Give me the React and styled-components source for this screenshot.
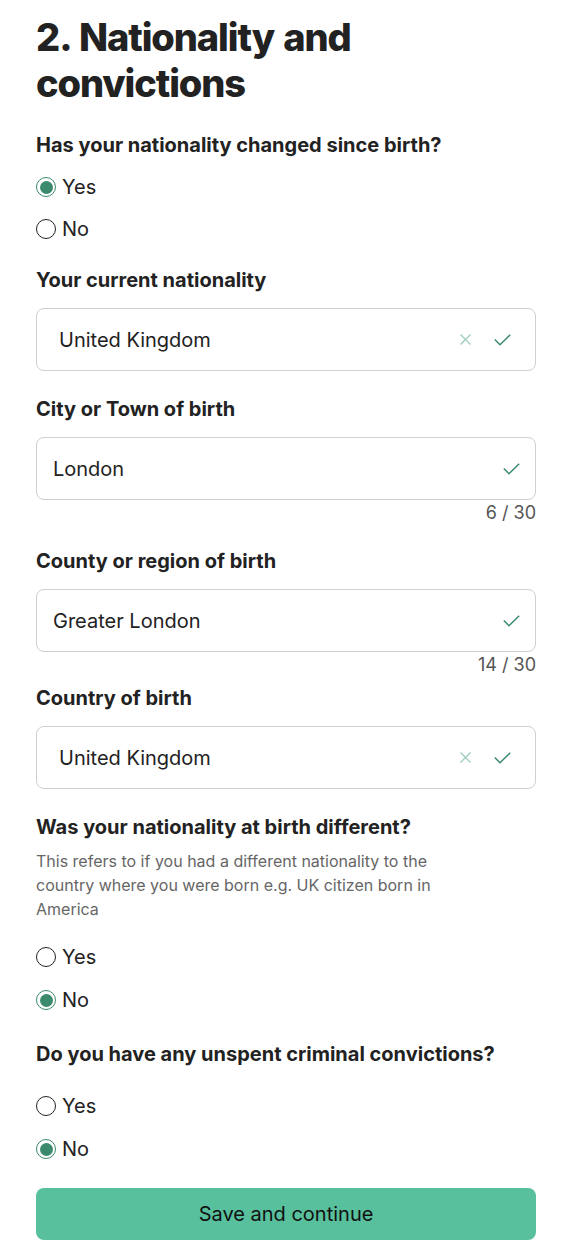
import React from 'react';
import styled, { createGlobalStyle } from 'styled-components';

const GlobalStyle = createGlobalStyle`
  body {
    margin: 0;
    background: #fff;
    font-family: Inter, "Noto Sans", sans-serif;
    color: #222;
  }
`;

const Page = styled.div`
  width: 500px;
  padding: 14px 36px 12px;
`;

const Title = styled.h1`
  margin: 0 0 26px;
  font-size: 38px;
  line-height: 46px;
  font-weight: 800;
  letter-spacing: -1.1px;
  word-spacing: 2px;
  color: #222;
`;

const Field = styled.div`
  display: flex;
  flex-direction: column;
  margin-bottom: ${(p) => p.gap ?? 25}px;
`;

const Label = styled.div`
  font-size: 20px;
  font-weight: 700;
  line-height: 26px;
  color: #222;
  margin-bottom: ${(p) => p.mb ?? 15}px;
`;

const Help = styled.div`
  max-width: 430px;
  font-size: 16px;
  line-height: 24px;
  color: #666;
  margin-bottom: 24px;
`;

const RadioList = styled.div`
  display: flex;
  flex-direction: column;
  gap: ${(p) => p.gap ?? 18}px;
`;

const RadioRow = styled.label`
  display: flex;
  align-items: center;
  gap: 6px;
  font-size: 20px;
  line-height: 24px;
  color: #222;
`;

const Dot = styled.span`
  width: 20px;
  height: 20px;
  box-sizing: border-box;
  border-radius: 50%;
  border: 1px solid ${(p) => (p.$on ? '#3b8a6c' : '#222')};
  display: flex;
  align-items: center;
  justify-content: center;
  &::after {
    content: '';
    display: ${(p) => (p.$on ? 'block' : 'none')};
    width: 13px;
    height: 13px;
    border-radius: 50%;
    background: #3b8a6c;
  }
`;

const Box = styled.div`
  height: 63px;
  box-sizing: border-box;
  border: 1px solid #cfcfcf;
  border-radius: 8px;
  display: flex;
  align-items: center;
  padding: 0 ${(p) => (p.$select ? 24 : 15)}px 0 ${(p) => (p.$select ? 22 : 16)}px;
  font-size: 20px;
  color: #222;
`;

const Value = styled.span`
  flex: 1;
`;

const Icons = styled.span`
  display: flex;
  align-items: center;
  gap: 23px;
`;

const Counter = styled.div`
  text-align: right;
  font-size: 18px;
  line-height: 20px;
  color: #555;
  margin-top: 3px;
`;

const Button = styled.button`
  display: block;
  width: 100%;
  height: 52px;
  border: none;
  border-radius: 8px;
  background: #58c09d;
  color: #111;
  font-family: inherit;
  font-size: 20px;
`;

const Cross = () => (
  <svg width="11" height="11" viewBox="0 0 11 11">
    <path d="M0.5 0.5 L10.5 10.5 M10.5 0.5 L0.5 10.5" stroke="#9ccdb9" strokeWidth="1.3" fill="none" />
  </svg>
);

const Check = () => (
  <svg width="17" height="12" viewBox="0 0 17 12">
    <path d="M0.8 5.5 L6 10.8 L16.2 0.8" stroke="#3b8a6c" strokeWidth="1.5" fill="none" />
  </svg>
);

const Radio = ({ label, on }) => (
  <RadioRow>
    <Dot $on={on} />
    {label}
  </RadioRow>
);

const Input = ({ value, select }) => (
  <Box $select={select}>
    <Value>{value}</Value>
    <Icons>
      {select && <Cross />}
      <Check />
    </Icons>
  </Box>
);

export default function App() {
  return (
    <>
      <GlobalStyle />
      <Page>
        <Title>2. Nationality and convictions</Title>

        <Field gap={26}>
          <Label mb={17}>Has your nationality changed since birth?</Label>
          <RadioList>
            <Radio label="Yes" on />
            <Radio label="No" />
          </RadioList>
        </Field>

        <Field>
          <Label>Your current nationality</Label>
          <Input value="United Kingdom" select />
        </Field>

        <Field>
          <Label>City or Town of birth</Label>
          <Input value="London" />
          <Counter>6 / 30</Counter>
        </Field>

        <Field gap={10}>
          <Label>County or region of birth</Label>
          <Input value="Greater London" />
          <Counter>14 / 30</Counter>
        </Field>

        <Field>
          <Label>Country of birth</Label>
          <Input value="United Kingdom" select />
        </Field>

        <Field gap={29}>
          <Label mb={9}>Was your nationality at birth different?</Label>
          <Help>
            This refers to if you had a different nationality to the country where you were born e.g. UK citizen born in America
          </Help>
          <RadioList gap={19}>
            <Radio label="Yes" />
            <Radio label="No" on />
          </RadioList>
        </Field>

        <Field gap={27}>
          <Label mb={27}>Do you have any unspent criminal convictions?</Label>
          <RadioList gap={19}>
            <Radio label="Yes" />
            <Radio label="No" on />
          </RadioList>
        </Field>

        <Button>Save and continue</Button>
      </Page>
    </>
  );
}
